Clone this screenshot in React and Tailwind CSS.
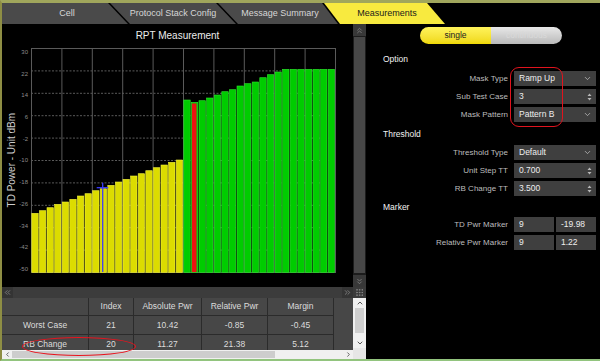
import { ChevronDown, ChevronUp, ChevronLeft, ChevronRight, ChevronsUp, ChevronsDown, ChevronsLeft, ChevronsRight, Grip } from 'lucide-react';

// bar tops in px from the plot top (plot is 224px tall, 40 bars of 7.6px)
const yellowTops = [165.3, 162.7, 159.7, 156.3, 154, 151.3, 148, 145.7, 142.7, 140.7, 137.3, 134, 131.3, 128, 125.7, 122.7, 119.7, 117, 114.3, 112];
const greenTops = [52, 54.3, 52.7, 50, 47, 43.7, 41.7, 38, 35.7, 34, 29.7, 26.7, 24, 21.3, 21.3, 21.3, 21.3, 21.3, 21.3, 21.3];
const ticks = [30, 22, 14, 6, -2, -10, -18, -26, -34, -42, -50];

const tableRows = [
  { h: 'h-[18px]', cells: ['', 'Index', 'Absolute Pwr', 'Relative Pwr', 'Margin', ''] },
  { h: 'h-[19px]', cells: ['Worst Case', '21', '10.42', '-0.85', '-0.45', ''] },
  { h: 'h-[19px]', cells: ['RB Change', '20', '11.27', '21.38', '5.12', ''] },
];

function Spinner() {
  return (
    <svg width="5" height="8" viewBox="0 0 5 8">
      <path d="M2.5 0.5 L4.5 3 L0.5 3 Z M2.5 7.5 L4.5 5 L0.5 5 Z" fill="#b8b8b8" />
    </svg>
  );
}

function Plot() {
  const bottom = 224.5;
  return (
    <svg width="305" height="225" viewBox="0 0 305 225">
      {Array.from({ length: 11 }).map((_, j) => (
        <line key={'h' + j} x1="0" x2="304" y1={0.5 + j * 22.4} y2={0.5 + j * 22.4} stroke="#5a5a5a" strokeWidth="1" strokeDasharray={j === 0 || j === 10 ? '' : '2 1.5'} />
      ))}
      {Array.from({ length: 11 }).map((_, i) => (
        <line key={'v' + i} y1="0" y2="225" x1={0.5 + i * 30.4} x2={0.5 + i * 30.4} stroke="#5a5a5a" strokeWidth="1" />
      ))}
      {yellowTops.map((t, i) => (
        <rect key={'y' + i} x={i * 7.6 + 0.8} y={t} width="6.4" height={bottom - t} fill="#dcdc00" stroke="#f2f23a" strokeWidth="0.6" />
      ))}
      {greenTops.map((t, i) => (
        <rect key={'g' + i} x={(i + 20) * 7.6 + 0.8} y={t} width="6.4" height={bottom - t} fill="#00cc00" stroke="#2ee52e" strokeWidth="0.6" />
      ))}
      <rect x={21 * 7.6 + 1.3} y={greenTops[1] + 1.2} width="4.6" height={bottom - greenTops[1] - 1.6} fill="#ee1111" />
      <line x1="71.7" x2="71.7" y1="134.7" y2="224" stroke="#3b3bff" strokeWidth="1.3" />
      <line x1="65.7" x2="77.3" y1="139.7" y2="139.7" stroke="#3b3bff" strokeWidth="1.3" />
    </svg>
  );
}

function Row({ label, children }) {
  return (
    <div className="flex items-center h-[15px]">
      <div className="w-[142px] text-right text-[8px] leading-none text-[#bdbdbd] whitespace-nowrap">{label}</div>
      <div className="ml-[6px] w-[82px] h-full flex gap-[2px]">{children}</div>
    </div>
  );
}

function Field({ value, kind }) {
  return (
    <div className="flex-1 bg-[#3f3f3f] flex items-center justify-between pl-[5px] pr-[4px] text-[8.5px] text-[#eeeeee] leading-none">
      <span>{value}</span>
      {kind === 'select' && <ChevronDown size={9} color="#c0c0c0" strokeWidth={2} />}
      {kind === 'spin' && <Spinner />}
    </div>
  );
}

function Header({ children, mt }) {
  return <div className={`${mt} h-[14px] pl-[17px] flex items-center text-[8.5px] text-[#f2f2f2]`}>{children}</div>;
}

export default function App() {
  return (
    <div className="w-[600px] h-[361px] bg-black overflow-hidden border-t-[3px] border-t-[#a0a65c] border-l-2 border-l-[#8e8e44] border-b-2 border-b-[#92c47e] font-[Liberation_Sans,Arial,sans-serif]">
      {/* tabs */}
      <div className="flex h-[21px] bg-black text-[9px]">
        <div className="w-[126px] pl-[4px] bg-[#4a4a4a] [clip-path:polygon(0_0,106px_0,126px_100%,0_100%)] flex items-center justify-center text-[#d6d6d6]">Cell</div>
        <div className="w-[126px] -ml-[18px] bg-[#4a4a4a] [clip-path:polygon(0_0,106px_0,126px_100%,20px_100%)] flex items-center justify-center text-[#d6d6d6] whitespace-nowrap">Protocol Stack Config</div>
        <div className="w-[120px] -ml-[18px] pl-[4px] bg-[#4a4a4a] [clip-path:polygon(0_0,104px_0,120px_100%,20px_100%)] flex items-center justify-center text-[#d6d6d6] whitespace-nowrap">Message Summary</div>
        <div className="w-[125px] -ml-[16px] pl-[5px] bg-[#f8ea3f] [clip-path:polygon(2px_0,105px_0,123px_100%,18px_100%)] flex items-center justify-center text-[#1a1a1a]">Measurements</div>
      </div>

      <div className="flex h-[335px]">
        {/* left: chart + table */}
        <div className="w-[364px] flex flex-col">
          <div className="flex h-[263px]">
            <div className="w-[351px] bg-black flex flex-col">
              <div className="h-[22px] flex items-center justify-center text-[10px] text-[#ececec]">RPT Measurement</div>
              <div className="mt-[2px] flex h-[225px]">
                <div className="w-[19px] flex items-center justify-center">
                  <span className="[writing-mode:vertical-rl] rotate-180 text-[10px] text-[#cccccc] whitespace-nowrap">TD Power - Unit dBm</span>
                </div>
                <div className="w-[10px] pr-[3px] flex flex-col justify-between items-end">
                  {ticks.map((t) => (
                    <div key={t} className="h-[8px] flex items-center text-[6px] leading-none text-[#8c8c8c] whitespace-nowrap">{t}</div>
                  ))}
                </div>
                <Plot />
              </div>
            </div>
            <div className="w-[13px] bg-[#1c1c1c] flex flex-col items-center">
              <div className="h-[12px] w-full bg-[#383838] flex items-center justify-center"><ChevronsUp size={9} color="#8a8a8a" /></div>
              <div className="mt-[1px] w-[11px] flex-1 bg-[#474747]" />
              <div className="mt-[2px] h-[12px] w-full bg-[#383838] flex items-center justify-center"><ChevronsDown size={9} color="#8a8a8a" /></div>
            </div>
          </div>

          <div className="flex h-[11px]">
            <div className="w-[351px] bg-[#3c3c3c] flex items-center justify-between">
              <div className="w-[11px] h-full bg-[#343434] flex items-center justify-center"><ChevronsLeft size={9} color="#8c8c8c" /></div>
              <div className="w-[11px] h-full bg-[#343434] flex items-center justify-center"><ChevronsRight size={9} color="#8c8c8c" /></div>
            </div>
            <div className="w-[13px] bg-[#3a3a3a] flex items-center justify-center"><Grip size={9} color="#8c8c8c" /></div>
          </div>

          <div className="flex h-[61px]">
            <div className="w-[351px] flex flex-col relative">
              <div className="h-[52px] overflow-hidden bg-[#474747]">
                <div className="grid grid-cols-[87px_45px_68px_66px_66px_1fr] text-[8.5px] text-[#dcdcdc]">
                  {tableRows.map((r, ri) =>
                    r.cells.map((c, ci) => (
                      <div key={ri + '-' + ci} className={`${r.h} flex items-center justify-center whitespace-nowrap ${ci < 5 ? 'border-r border-b border-[#2b2b2b]' : ''}`}>{c}</div>
                    ))
                  )}
                </div>
              </div>
              <div className="h-[9px] bg-[#f0f0f0] flex items-center">
                <div className="w-[10px] flex justify-center"><ChevronLeft size={7} color="#555" strokeWidth={3} /></div>
                <div className="w-[263px] h-[7px] bg-[#cdcdcd]" />
                <div className="flex-1" />
                <div className="w-[10px] flex justify-center"><ChevronRight size={7} color="#555" strokeWidth={3} /></div>
              </div>
              <div className="absolute left-[20px] top-[39px] w-[114px] h-[19px] rounded-[50%] border border-[#e8141e]" />
            </div>
            <div className="w-[13px] bg-[#f0f0f0] flex flex-col items-center">
              <div className="h-[10px] flex items-center"><ChevronUp size={8} color="#555" strokeWidth={3} /></div>
              <div className="w-[9px] h-[25px] bg-[#cfcfcf]" />
              <div className="flex-1" />
              <div className="h-[10px] flex items-center"><ChevronDown size={8} color="#555" strokeWidth={3} /></div>
              <div className="h-[11px] w-full bg-[#e6e6e6]" />
            </div>
          </div>
        </div>

        {/* right: options */}
        <div className="flex-1 bg-black relative flex flex-col">
          <div className="ml-[54px] mt-[3px] flex w-[142px] h-[17px] rounded-full overflow-hidden text-[8.5px]">
            <div className="w-[71px] bg-linear-to-b from-[#fff35a] to-[#efd800] flex items-center justify-center text-[#222]">single</div>
            <div className="flex-1 bg-linear-to-b from-[#e8e8e8] to-[#b9b9b9] flex items-center justify-center text-[#d9d9d9]">continuous</div>
          </div>

          <Header mt="mt-[8px]">Option</Header>
          <div className="mt-[5px] flex flex-col gap-[3px]">
            <Row label="Mask Type"><Field value="Ramp Up" kind="select" /></Row>
            <Row label="Sub Test Case"><Field value="3" kind="spin" /></Row>
            <Row label="Mask Pattern"><Field value="Pattern B" kind="select" /></Row>
          </div>

          <Header mt="mt-[5px]">Threshold</Header>
          <div className="mt-[4px] flex flex-col gap-[3px]">
            <Row label="Threshold Type"><Field value="Default" kind="select" /></Row>
            <Row label="Unit Step TT"><Field value="0.700" kind="spin" /></Row>
            <Row label="RB Change TT"><Field value="3.500" kind="spin" /></Row>
          </div>

          <Header mt="mt-[4px]">Marker</Header>
          <div className="mt-[3px] flex flex-col gap-[3px]">
            <Row label="TD Pwr Marker"><Field value="9" /><Field value="-19.98" /></Row>
            <Row label="Relative Pwr Marker"><Field value="9" /><Field value="1.22" /></Row>
          </div>

          <div className="absolute left-[144px] top-[43px] w-[53px] h-[60px] rounded-[9px] border-[1.5px] border-[#e0141e]" />
        </div>
      </div>
    </div>
  );
}
